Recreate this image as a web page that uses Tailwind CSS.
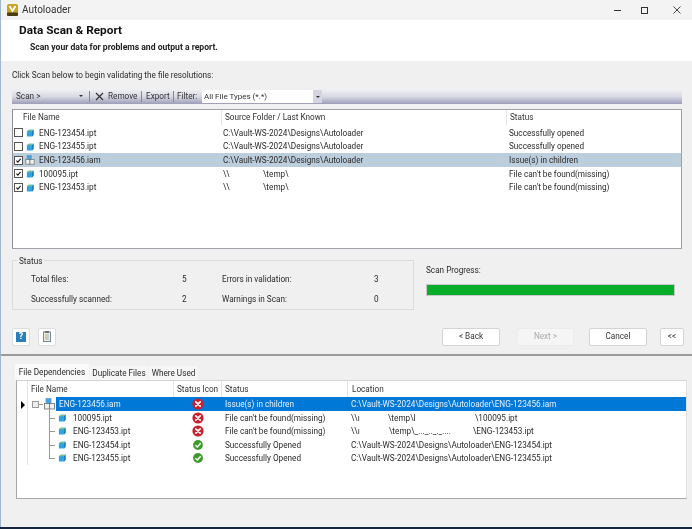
<!doctype html>
<html lang="en">
<head>
  <meta charset="UTF-8">
  <script src="https://cdn.jsdelivr.net/npm/@tailwindcss/browser@4"></script>
  <title>Autoloader</title>
</head>
<body class="overflow-hidden bg-[#16263f]">
  <svg class="hidden">
    <symbol id="part" viewBox="0 0 9 9">
      <path d="M1 2.5 3 .8h5.5v5.7L7 8.5H1z" fill="#2fa3e6"/>
      <path d="M1 2.5 3 .8h5.5L7 2.5z" fill="#7fbf8a"/>
      <path d="M7 2.5 8.5.8v5.7L7 8.5z" fill="#1576b8"/>
    </symbol>
    <symbol id="asm" viewBox="0 0 11 12">
      <rect x="2" y=".5" width="5" height="5" fill="#3ea6e6" stroke="#6d93b0" stroke-width=".7"/>
      <rect x=".5" y="5.5" width="5" height="5.5" fill="#f2f2f2" stroke="#6b6b6b" stroke-width=".8"/>
      <rect x="5.5" y="5.5" width="5" height="5.5" fill="#f2f2f2" stroke="#6b6b6b" stroke-width=".8"/>
    </symbol>
    <symbol id="err" viewBox="0 0 12 12">
      <circle cx="6" cy="6" r="5.6" fill="#c8202c"/>
      <path d="M3.8 3.8 8.2 8.2M8.2 3.8 3.8 8.2" stroke="#fff" stroke-width="1.7" stroke-linecap="round"/>
    </symbol>
    <symbol id="ok" viewBox="0 0 12 12">
      <circle cx="6" cy="6" r="4.9" fill="#3f9a2e"/>
      <path d="M3.4 6.2 5.3 8 8.7 4.2" stroke="#fff" fill="none" stroke-width="1.4"/>
    </symbol>
    <symbol id="tick" viewBox="0 0 10 10">
      <path d="M2 5.2 4.1 7.3 8 2.8" stroke="#111" fill="none" stroke-width="1.5"/>
    </symbol>
  </svg>

  <div class="w-[692px] h-[527px] flex flex-col border-l border-[#9fb6cc] bg-[#f0f0f0] text-[8.2px] leading-none text-[#2a2a2a] font-['Roboto',sans-serif] blur-[0.3px]">
    <!-- title bar -->
    <div class="h-5 shrink-0 flex items-center bg-[#f3f3f3] pl-[6px] text-[10px]">
      <svg class="w-[11px] h-[12px]" viewBox="0 0 11 12"><rect width="11" height="12" rx="2" fill="#c9a227"/><path d="M2.5 2 5.5 7 8.5 2" stroke="#fff" stroke-width="1.8" fill="none"/><rect y="8.5" width="11" height="3.5" rx="1" fill="#4a3d12"/></svg>
      <span class="ml-[4px] text-[#333]">Autoloader</span>
      <div class="ml-auto flex items-center">
        <span class="w-[7px] h-px bg-[#333] mr-[20px]"></span>
        <span class="w-[7px] h-[7px] border border-[#333] mr-[25px]"></span>
        <svg class="w-[8px] h-[8px] mr-[11px]" viewBox="0 0 8 8"><path d="M.5.5l7 7M7.5.5l-7 7" stroke="#333" stroke-width=".9"/></svg>
      </div>
    </div>
    <!-- header -->
    <div class="h-[41px] shrink-0 bg-white pl-[18px] pt-[3px]">
      <div class="text-[11.8px] font-bold text-[#111] leading-[14px]">Data Scan &amp; Report</div>
      <div class="pl-[11px] mt-[6px] text-[8.6px] font-bold text-[#222]">Scan your data for problems and output a report.</div>
    </div>

    <!-- upper panel -->
    <div class="h-[293px] shrink-0 px-[11px] pt-[9px]">
      <div class="h-[19px] leading-[11px]">Click Scan below to begin validating the file resolutions:</div>
      <div class="w-[670px] h-[15px] flex items-center bg-gradient-to-b from-[#f1f1f5] via-[#d9d9e4] to-[#9d9db8] text-[#333]">
        <div class="w-[76px] pl-[4px] flex items-center justify-between pr-[5px]"><span>Scan &gt;</span><span class="border-x-[2px] border-t-[2px] border-x-transparent border-t-[#333]"></span></div>
        <span class="w-px h-[11px] bg-[#888] mr-[5px] ml-[1px]"></span>
        <svg class="w-[9px] h-[9px]" viewBox="0 0 9 9"><path d="M1 1l7 7M8 1 1 8" stroke="#333" stroke-width="1.2"/></svg>
        <span class="ml-[4px] w-[30px]">Remove</span>
        <span class="w-px h-[11px] bg-[#888] mx-[3px]"></span>
        <span class="ml-[1px] w-[24px]">Export</span>
        <span class="w-px h-[11px] bg-[#888] mx-[3px]"></span>
        <span class="w-[22px]">Filter:</span>
        <div class="ml-[3px] w-[120px] h-[13px] bg-white flex items-center pl-[2px] text-[8px]">All File Types (*.*)
          <span class="ml-auto w-[9px] h-[13px] bg-[#d5d5e2] flex items-center justify-center"><span class="border-x-[2px] border-t-[2px] border-x-transparent border-t-[#333]"></span></span>
        </div>
      </div>

      <!-- file table -->
      <div class="mt-[5px] w-[670px] h-[140px] bg-white border border-[#a0a0a8] border-l-[#8e8e96]">
        <div class="grid grid-cols-[209px_285px_1fr] h-[15px] items-center text-[#333]">
          <div class="pl-[10px] border-r border-[#e4e4e4] h-full flex items-center">File Name</div>
          <div class="pl-[3px] border-r border-[#e4e4e4] h-full flex items-center">Source Folder / Last Known</div>
          <div class="pl-[3px]">Status</div>
        </div>
        <div class="grid grid-cols-[209px_285px_1fr] h-[13.7px] items-center mt-px">
          <div class="flex items-center pl-[1px]"><span class="w-[9px] h-[9px] border border-[#555] bg-white"></span><svg class="w-[8px] h-[8px] ml-[3px]"><use href="#part"/></svg><span class="ml-[5px]">ENG-123454.ipt</span></div>
          <div class="pl-[1px]">C:\Vault-WS-2024\Designs\Autoloader</div>
          <div class="pl-[2px]">Successfully opened</div>
        </div>
        <div class="grid grid-cols-[209px_285px_1fr] h-[13.7px] items-center">
          <div class="flex items-center pl-[1px]"><span class="w-[9px] h-[9px] border border-[#555] bg-white"></span><svg class="w-[8px] h-[8px] ml-[3px]"><use href="#part"/></svg><span class="ml-[5px]">ENG-123455.ipt</span></div>
          <div class="pl-[1px]">C:\Vault-WS-2024\Designs\Autoloader</div>
          <div class="pl-[2px]">Successfully opened</div>
        </div>
        <div class="grid grid-cols-[209px_285px_1fr] h-[13.7px] items-center bg-[#bccddc]">
          <div class="flex items-center pl-[1px]"><span class="w-[9px] h-[9px] border border-[#555] bg-white"><svg class="w-[7px] h-[7px]"><use href="#tick"/></svg></span><svg class="w-[10px] h-[10px] ml-[2px]"><use href="#asm"/></svg><span class="ml-[4px]">ENG-123456.iam</span></div>
          <div class="pl-[1px]">C:\Vault-WS-2024\Designs\Autoloader</div>
          <div class="pl-[2px]">Issue(s) in children</div>
        </div>
        <div class="grid grid-cols-[209px_285px_1fr] h-[13.7px] items-center">
          <div class="flex items-center pl-[1px]"><span class="w-[9px] h-[9px] border border-[#555] bg-white"><svg class="w-[7px] h-[7px]"><use href="#tick"/></svg></span><svg class="w-[8px] h-[8px] ml-[3px]"><use href="#part"/></svg><span class="ml-[5px]">100095.ipt</span></div>
          <div class="pl-[1px] flex"><span class="w-[40px]">\\</span><span>\temp\</span></div>
          <div class="pl-[2px]">File can't be found(missing)</div>
        </div>
        <div class="grid grid-cols-[209px_285px_1fr] h-[13.7px] items-center">
          <div class="flex items-center pl-[1px]"><span class="w-[9px] h-[9px] border border-[#555] bg-white"><svg class="w-[7px] h-[7px]"><use href="#tick"/></svg></span><svg class="w-[8px] h-[8px] ml-[3px]"><use href="#part"/></svg><span class="ml-[5px]">ENG-123453.ipt</span></div>
          <div class="pl-[1px] flex"><span class="w-[40px]">\\</span><span>\temp\</span></div>
          <div class="pl-[2px]">File can't be found(missing)</div>
        </div>
      </div>

      <!-- status + progress -->
      <div class="mt-[11px] flex">
        <div class="relative w-[402px] h-[50px] border border-[#dcdcdc] grid grid-cols-[151px_40px_152px_1fr] grid-rows-2 pl-[18px] pt-[8px] items-center">
          <span class="absolute -top-[4px] left-[4px] px-[2px] bg-[#f0f0f0]">Status</span>
          <span>Total files:</span><span>5</span><span>Errors in validation:</span><span>3</span>
          <span>Successfully scanned:</span><span>2</span><span>Warnings in Scan:</span><span>0</span>
        </div>
        <div class="ml-[12px] w-[249px] pt-[6px]">
          <div>Scan Progress:</div>
          <div class="mt-[10px] h-[12px] border border-[#c8c8c8] bg-[#08ae2a]"></div>
        </div>
      </div>

      <!-- buttons -->
      <div class="mt-[17px] flex items-center h-[19px]">
        <div class="shrink-0 w-[18px] h-[18px] bg-white border border-[#ddd] rounded-[2px] flex items-center justify-center">
          <span class="w-[10px] h-[10px] bg-[#2b7fb8] text-white text-[9px] font-bold flex items-center justify-center">?</span>
        </div>
        <div class="shrink-0 ml-[8px] w-[18px] h-[18px] bg-white border border-[#ddd] rounded-[2px] flex items-center justify-center">
          <svg class="w-[8px] h-[11px]" viewBox="0 0 8 11"><rect x=".5" y="1" width="7" height="9.5" fill="#f2efd8" stroke="#6f8aa0"/><rect x="2" width="4" height="2" fill="#6f6f6f"/><path d="M2 4h4M2 6h4M2 8h4" stroke="#8a8a8a" stroke-width=".7"/></svg>
        </div>
        <button class="shrink-0 ml-[386px] w-[58px] h-[18px] bg-white border border-[#d4d4d4] rounded-[2px] text-[#333]">&lt; Back</button>
        <button class="shrink-0 ml-[17px] w-[57px] h-[18px] bg-[#f5f5f5] border border-[#ececec] rounded-[2px] text-[#aaa]">Next &gt;</button>
        <button class="shrink-0 ml-[15px] w-[58px] h-[18px] bg-white border border-[#d4d4d4] rounded-[2px] text-[#333]">Cancel</button>
        <button class="shrink-0 ml-[13px] w-[24px] h-[18px] bg-white border border-[#d4d4d4] rounded-[2px] text-[#333]">&lt;&lt;</button>
      </div>
    </div>

    <div class="h-[2px] shrink-0 bg-[#9a9a9a]"></div>

    <!-- lower panel -->
    <div class="flex-1 pl-[14px] pr-[4px] pt-[8px]">
      <div class="flex items-end h-[16px]">
        <div class="w-[74px] h-[16px] bg-[#fafafa] flex items-center justify-center">File Dependencies</div>
        <div class="ml-px w-[58px] h-[14px] bg-[#f6f6f6] flex items-center justify-center">Duplicate Files</div>
        <div class="ml-px w-[49px] h-[14px] bg-[#f6f6f6] flex items-center justify-center">Where Used</div>
      </div>
      <div class="ml-px w-[671px] h-[119px] bg-white border border-[#a8a8a8] border-t-[#d4d4d4] border-r-[#e0e0e0]">
        <div class="grid grid-cols-[11px_146px_48px_126px_1fr] h-[16px] items-center text-[#333]">
          <div class="h-full border-r border-[#e4e4e4]"></div>
          <div class="pl-[3px] h-full flex items-center border-r border-[#e4e4e4]">File Name</div>
          <div class="pl-[3px] h-full flex items-center border-r border-[#e4e4e4]">Status Icon</div>
          <div class="pl-[3px] h-full flex items-center border-r border-[#e4e4e4]">Status</div>
          <div class="pl-[4px]">Location</div>
        </div>
        <div class="flex">
          <div class="w-[11px] h-[68px] border-r border-[#e4e4e4] pt-[4px] pl-[4px]">
            <span class="block w-0 h-0 border-y-[4px] border-l-[4px] border-y-transparent border-l-black"></span>
          </div>
          <div class="flex-1 relative">
            <!-- tree connector lines -->
            <span class="absolute left-[21px] top-[13px] h-[49px] border-l border-[#999]"></span>
            <span class="absolute left-[21px] top-[21px] w-[6px] border-t border-[#999]"></span>
            <span class="absolute left-[21px] top-[34px] w-[6px] border-t border-[#999]"></span>
            <span class="absolute left-[21px] top-[48px] w-[6px] border-t border-[#999]"></span>
            <span class="absolute left-[21px] top-[61px] w-[6px] border-t border-[#999]"></span>

            <div class="grid grid-cols-[146px_48px_126px_1fr] h-[14px] items-center">
              <div class="flex items-center pl-[4px] h-full">
                <span class="w-[7px] h-[7px] border border-[#999] bg-[#eee]"></span><span class="w-[4px] border-t border-[#999]"></span>
                <svg class="w-[11px] h-[12px] ml-px"><use href="#asm"/></svg>
                <span class="ml-[1px] flex-1 h-full bg-[#0078d7] text-[#e8f2fb] pl-[3px] flex items-center">ENG-123456.iam</span>
              </div>
              <div class="h-full bg-[#0078d7] flex items-center justify-center"><svg class="w-[12px] h-[12px]"><use href="#err"/></svg></div>
              <div class="h-full bg-[#0078d7] text-[#e8f2fb] pl-[3px] flex items-center">Issue(s) in children</div>
              <div class="h-full bg-[#0078d7] text-[#e8f2fb] pl-[3px] flex items-center">C:\Vault-WS-2024\Designs\Autoloader\ENG-123456.iam</div>
            </div>
            <div class="grid grid-cols-[146px_48px_126px_1fr] h-[13.5px] items-center">
              <div class="flex items-center pl-[30px]"><svg class="w-[8px] h-[8px]"><use href="#part"/></svg><span class="ml-[7px]">100095.ipt</span></div>
              <div class="flex justify-center"><svg class="w-[12px] h-[12px]"><use href="#err"/></svg></div>
              <div class="pl-[3px]">File can't be found(missing)</div>
              <div class="pl-[3px] flex"><span class="w-[37px]">\\ı</span><span class="w-[87px]">\temp\l</span><span>\100095.ipt</span></div>
            </div>
            <div class="grid grid-cols-[146px_48px_126px_1fr] h-[13.5px] items-center">
              <div class="flex items-center pl-[30px]"><svg class="w-[8px] h-[8px]"><use href="#part"/></svg><span class="ml-[7px]">ENG-123453.ipt</span></div>
              <div class="flex justify-center"><svg class="w-[12px] h-[12px]"><use href="#err"/></svg></div>
              <div class="pl-[3px]">File can't be found(missing)</div>
              <div class="pl-[3px] flex"><span class="w-[38px]">\\ı</span><span class="w-[84px]">\temp\_..._.._._....</span><span>\ENG-123453.ipt</span></div>
            </div>
            <div class="grid grid-cols-[146px_48px_126px_1fr] h-[13.5px] items-center">
              <div class="flex items-center pl-[30px]"><svg class="w-[8px] h-[8px]"><use href="#part"/></svg><span class="ml-[7px]">ENG-123454.ipt</span></div>
              <div class="flex justify-center"><svg class="w-[12px] h-[12px]"><use href="#ok"/></svg></div>
              <div class="pl-[3px]">Successfully Opened</div>
              <div class="pl-[3px]">C:\Vault-WS-2024\Designs\Autoloader\ENG-123454.ipt</div>
            </div>
            <div class="grid grid-cols-[146px_48px_126px_1fr] h-[13.5px] items-center">
              <div class="flex items-center pl-[30px]"><svg class="w-[8px] h-[8px]"><use href="#part"/></svg><span class="ml-[7px]">ENG-123455.ipt</span></div>
              <div class="flex justify-center"><svg class="w-[12px] h-[12px]"><use href="#ok"/></svg></div>
              <div class="pl-[3px]">Successfully Opened</div>
              <div class="pl-[3px]">C:\Vault-WS-2024\Designs\Autoloader\ENG-123455.ipt</div>
            </div>
          </div>
        </div>
      </div>
    </div>
  </div>
</body>
</html>
